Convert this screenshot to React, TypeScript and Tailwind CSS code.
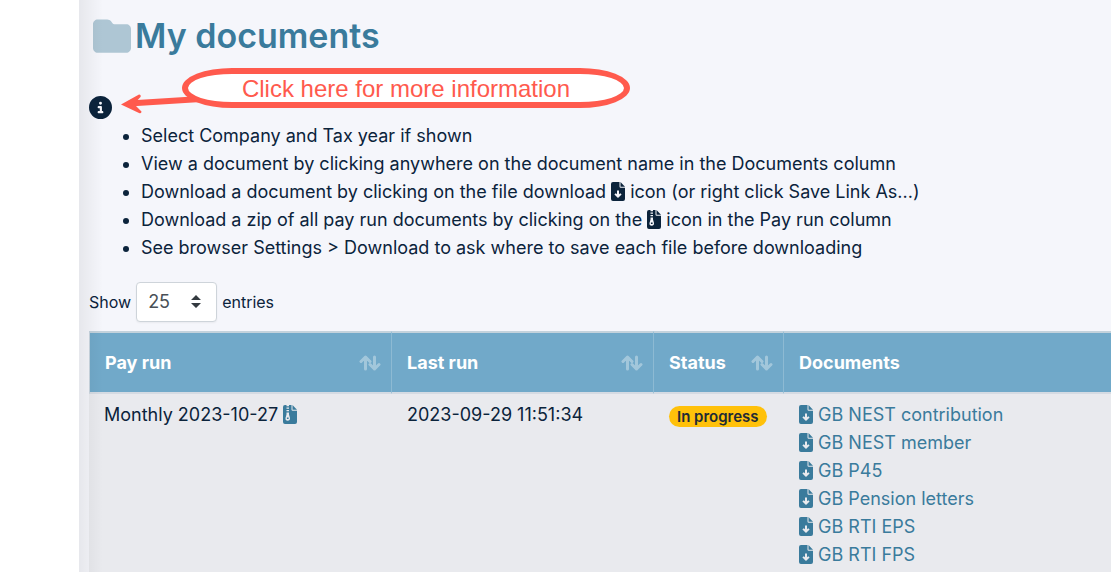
import { FaCircleInfo, FaFolder } from "react-icons/fa6";

const documents = [
  "GB NEST contribution",
  "GB NEST member",
  "GB P45",
  "GB Pension letters",
  "GB RTI EPS",
  "GB RTI FPS",
];

function FileDownloadIcon() {
  return (
    <svg viewBox="0 0 14 19" className="inline h-[19px] w-[14px] align-[-3px]" aria-hidden="true">
      <path
        fill="currentColor"
        fillRule="evenodd"
        d="M2 0H8.500V4.500Q8.500 5.700 9.700 5.700H14V17Q14 19 12 19H2Q0 19 0 17V2Q0 0 2 0ZM6 8.500V12.300L4.700 11.200 3.400 12.500 7 16 10.600 12.500 9.300 11.200 8 12.300V8.500Z"
      />
      <path fill="currentColor" d="M9.500 0 14 4.700H9.500Z" />
    </svg>
  );
}

function FileZipIcon() {
  return (
    <svg viewBox="0 0 14 19" className="inline h-[19px] w-[14px] align-[-3px]" aria-hidden="true">
      <path
        fill="currentColor"
        fillRule="evenodd"
        d="M2 0H3.500V1.200H6V0H8.500V4.500Q8.500 5.700 9.700 5.700H14V17Q14 19 12 19H2Q0 19 0 17V2Q0 0 2 0ZM3.500 2.500V3.700H6V2.500ZM3.500 5V6.200H6V5ZM3.500 7.500V9.500L2.500 13Q2.200 15.800 4.700 15.800T7 13L6 9.500V7.500ZM3.900 12.500H5.600V13.900H3.900Z"
      />
      <path fill="currentColor" d="M9.500 0 14 4.700H9.500Z" />
    </svg>
  );
}

function SortIcon() {
  return (
    <svg
      viewBox="0 0 22 16"
      className="h-4 w-[22px] shrink-0 opacity-35"
      fill="none"
      stroke="currentColor"
      strokeWidth="3"
      strokeLinecap="round"
      strokeLinejoin="round"
      aria-hidden="true"
    >
      <path d="M6.500 14V2M2 6.500 6.500 2l4.500 4.500M15.500 2v12M11 9.500l4.500 4.500 4.500-4.500" />
    </svg>
  );
}

function Callout() {
  return (
    <div className="absolute -top-7 left-8 flex">
      <svg viewBox="0 0 80 50" className="h-[50px] w-20" aria-hidden="true">
        <path d="M80 31 8 35.500" stroke="#ff5a4d" strokeWidth="6" />
        <path
          d="M0 36.500 18 26.500Q20.500 27 19.500 29L13 36 20.500 43.500Q20.500 46 18 45Z"
          fill="#ff5a4d"
        />
      </svg>
      <div className="-ml-[19px] flex h-10 w-[448px] items-center justify-center rounded-[50px/20px] border-[6px] border-[#ff5a4d] bg-white pt-px font-['Liberation_Sans',Arial,sans-serif] text-2xl text-[#ff5a4d]">
        Click here for more information
      </div>
    </div>
  );
}

export default function App() {
  return (
    <div className="flex h-screen overflow-hidden bg-white font-[Inter,sans-serif] text-lg leading-7 text-[#0b233b]">
      <main className="relative ml-[79px] min-w-0 flex-1 bg-[#f5f6fb] pl-[10px]">
        <div className="pointer-events-none absolute inset-y-0 left-0 w-6 bg-linear-to-r from-black/6 to-transparent" />

        <h1 className="flex items-center gap-1 pt-3 pl-1 text-[34px] leading-12 font-semibold text-[#3a7b9c]">
          <FaFolder className="size-[38px] text-[#aec6d4]" />
          My documents
        </h1>

        <div className="relative mt-9 h-6">
          <button type="button" aria-label="More information" className="block cursor-pointer">
            <FaCircleInfo className="size-[23px]" />
          </button>
          <Callout />
        </div>

        <ul className="mt-0.5 list-disc pl-[52px]">
          <li>Select Company and Tax year if shown</li>
          <li>View a document by clicking anywhere on the document name in the Documents column</li>
          <li>
            Download a document by clicking on the file download <FileDownloadIcon /> icon (or right click Save Link As...)
          </li>
          <li>
            Download a zip of all pay run documents by clicking on the <FileZipIcon /> icon in the Pay run column
          </li>
          <li>See browser Settings &gt; Download to ask where to save each file before downloading</li>
        </ul>

        <div className="mt-5 flex items-center gap-[5px] text-base">
          <label htmlFor="page-size">Show</label>
          <div className="relative">
            <select
              id="page-size"
              defaultValue="25"
              className="block h-10 w-[81px] appearance-none rounded border border-[#ced4da] bg-white pl-[11px] text-lg text-[#495057] shadow-xs"
            >
              <option>10</option>
              <option>25</option>
              <option>50</option>
              <option>100</option>
            </select>
            <svg
              viewBox="0 0 10 13"
              className="pointer-events-none absolute top-[13px] right-4 h-[13px] w-[10px]"
              fill="#343a40"
              aria-hidden="true"
            >
              <path d="M5 0 10 5H0ZM0 8h10l-5 5Z" />
            </svg>
          </div>
          <span>entries</span>
        </div>

        <table className="mt-[9px] w-full table-fixed border-separate border-spacing-0">
          <thead>
            <tr className="text-left text-white [&>th]:h-[63px] [&>th]:border-t-2 [&>th]:border-b-2 [&>th]:border-t-[#c3d2dc] [&>th]:border-b-[#d5dbe3] [&>th]:bg-[#71a9c9] [&>th]:px-[15px] [&>th]:font-bold">
              <th className="w-[303px] border-x border-r-[#8dbad3] border-l-[#c9d5df]">
                <div className="-mr-[5px] flex items-center justify-between">
                  Pay run
                  <SortIcon />
                </div>
              </th>
              <th className="w-[262px] border-r border-r-[#8dbad3]">
                <div className="-mr-[5px] flex items-center justify-between">
                  Last run
                  <SortIcon />
                </div>
              </th>
              <th className="w-[130px] border-r border-r-[#8dbad3]">
                <div className="-mr-[5px] flex items-center justify-between">
                  Status
                  <SortIcon />
                </div>
              </th>
              <th>Documents</th>
            </tr>
          </thead>
          <tbody>
            <tr className="bg-[#e9eaee] align-top [&>td]:px-[15px] [&>td]:py-[7px]">
              <td>
                Monthly 2023-10-27{" "}
                <a href="#zip" aria-label="Download zip" className="text-[#3a7b9c]">
                  <FileZipIcon />
                </a>
              </td>
              <td>2023-09-29 11:51:34</td>
              <td>
                <span className="mt-[5px] flex h-[21px] w-fit items-center rounded-full bg-[#ffc10a] px-2 text-[15px] font-semibold whitespace-nowrap text-[#212a35]">
                  In progress
                </span>
              </td>
              <td>
                <ul className="text-[#3a7b9c]">
                  {documents.map((name) => (
                    <li key={name}>
                      <a href="#document">
                        <FileDownloadIcon /> {name}
                      </a>
                    </li>
                  ))}
                </ul>
              </td>
            </tr>
          </tbody>
        </table>
      </main>
    </div>
  );
}
